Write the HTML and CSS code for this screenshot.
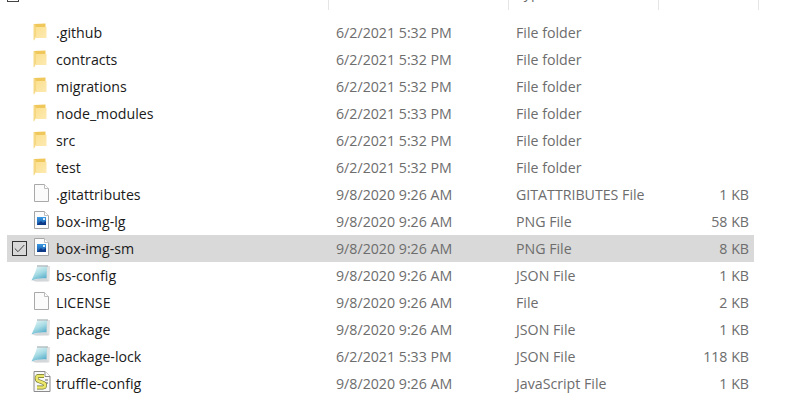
FILE: index.html
```html
<!DOCTYPE html>
<html lang="en">
<head>
    <meta charset="UTF-8">
    <title>Explorer file list</title>
    <link rel="stylesheet" href="styles.css">
</head>
<body>
    <svg class="defs" width="0" height="0">
        <defs>
            <linearGradient id="folder-fill" x1="0" y1="0" x2="1" y2="1">
                <stop offset="0" stop-color="#fbe08f"/>
                <stop offset="1" stop-color="#fdeab2"/>
            </linearGradient>
            <linearGradient id="pic-fill" x1="0" y1="0" x2="0" y2="1">
                <stop offset="0" stop-color="#3b9be6"/>
                <stop offset="1" stop-color="#14509f"/>
            </linearGradient>
            <linearGradient id="pad-fill" x1="0.2" y1="0" x2="0.7" y2="1">
                <stop offset="0" stop-color="#e4f5f6"/>
                <stop offset="0.5" stop-color="#a6dbe4"/>
                <stop offset="1" stop-color="#4fa9c8"/>
            </linearGradient>
            <symbol id="i-folder" viewBox="0 0 14 18">
                <path d="M1 1 L12.500 0.500 V14 H2 Z" fill="#f0c75a"/>
                <path d="M2.500 4 H13.500 V15 H2.500 Z" fill="url(#folder-fill)"/>
                <path d="M0.500 1 L2.500 2 V15 L1 17.500 L0.500 17 Z" fill="#f6d987"/>
            </symbol>
            <symbol id="i-blank" viewBox="0 0 15 18">
                <path d="M0.500 0.500 H10.500 L14.500 4.500 V17.500 H0.500 Z" fill="#fbfbfb" stroke="#a9a9a9"/>
                <path d="M10.500 0.500 V4.500 H14.500" fill="#fff" stroke="#bcbcbc"/>
            </symbol>
            <symbol id="i-image" viewBox="0 0 15 18">
                <path d="M0.500 0.500 H10.500 L14.500 4.500 V17.500 H0.500 Z" fill="#fcfcfc" stroke="#a5a5a5"/>
                <path d="M10.500 0.500 V4.500 H14.500" fill="#fff" stroke="#bcbcbc"/>
                <rect x="3" y="6" width="9" height="8" fill="url(#pic-fill)"/>
                <path d="M3 14 L7 10 L9 12 L12 10 V14 Z" fill="#0f3a88"/>
                <rect x="9" y="7" width="2" height="2" fill="#d8eefc"/>
            </symbol>
            <symbol id="i-notepad" viewBox="0 0 20 17">
                <path d="M15 1 H19 L18.500 16 L5 16.500 Z" fill="#e2e2e2"/>
                <path d="M1 15 C6 14 11 13.500 16 14 L18 16.500 H4 Z" fill="#d3d7d9"/>
                <path d="M6 1.500 H16 L15.500 13.500 C11 13 5 14 0.500 15.500 C2.500 11 5 6 6 1.500 Z" fill="url(#pad-fill)"/>
                <path d="M6 1 H17" stroke="#a3b0b4" stroke-width="1.200" fill="none"/>
            </symbol>
            <symbol id="i-script" viewBox="0 0 18 21">
                <path d="M1 0.500 H12 L17 5.500 V20.500 H1 Z" fill="#f8f8f8" stroke="#8c8c8c"/>
                <path d="M12 0.500 V5.500 H17" fill="#fff" stroke="#8c8c8c"/>
                <path d="M11 5 H5.500 C3 5 3 9 5.500 10 L10.500 12 C13 13 12.500 16.500 10 16.500 H4" fill="none" stroke="#6b7330" stroke-width="3.800"/>
                <path d="M11 5 H5.500 C3 5 3 9 5.500 10 L10.500 12 C13 13 12.500 16.500 10 16.500 H4" fill="none" stroke="#ece66a" stroke-width="2.600"/>
                <path d="M12 9 H15 M13 12 H15" stroke="#666" stroke-width="1"/>
            </symbol>
        </defs>
    </svg>

    <div class="head">
        <div class="head-cell head-name"><span class="head-check"></span></div>
        <div class="head-cell head-date"></div>
        <div class="head-cell head-type"><span>Type</span></div>
        <div class="head-cell head-size"></div>
        <div class="head-cell"></div>
    </div>

    <ul class="files">
        <li class="row"><span></span><svg class="icon folder"><use href="#i-folder"/></svg><span class="name">.github</span><span class="meta">6/2/2021 5:32 PM</span><span class="meta">File folder</span><span class="meta size"></span></li>
        <li class="row"><span></span><svg class="icon folder"><use href="#i-folder"/></svg><span class="name">contracts</span><span class="meta">6/2/2021 5:32 PM</span><span class="meta">File folder</span><span class="meta size"></span></li>
        <li class="row"><span></span><svg class="icon folder"><use href="#i-folder"/></svg><span class="name">migrations</span><span class="meta">6/2/2021 5:32 PM</span><span class="meta">File folder</span><span class="meta size"></span></li>
        <li class="row"><span></span><svg class="icon folder"><use href="#i-folder"/></svg><span class="name">node_modules</span><span class="meta">6/2/2021 5:33 PM</span><span class="meta">File folder</span><span class="meta size"></span></li>
        <li class="row"><span></span><svg class="icon folder"><use href="#i-folder"/></svg><span class="name">src</span><span class="meta">6/2/2021 5:32 PM</span><span class="meta">File folder</span><span class="meta size"></span></li>
        <li class="row"><span></span><svg class="icon folder"><use href="#i-folder"/></svg><span class="name">test</span><span class="meta">6/2/2021 5:32 PM</span><span class="meta">File folder</span><span class="meta size"></span></li>
        <li class="row"><span></span><svg class="icon page"><use href="#i-blank"/></svg><span class="name">.gitattributes</span><span class="meta">9/8/2020 9:26 AM</span><span class="meta">GITATTRIBUTES File</span><span class="meta size">1 KB</span></li>
        <li class="row"><span></span><svg class="icon page"><use href="#i-image"/></svg><span class="name">box-img-lg</span><span class="meta">9/8/2020 9:26 AM</span><span class="meta">PNG File</span><span class="meta size">58 KB</span></li>
        <li class="row selected">
            <span class="check"><svg width="11" height="9" viewBox="0 0 11 9"><path d="M0.800 4.500 L4 7.700 L10.300 1" fill="none" stroke="#444" stroke-width="1"/></svg></span>
            <svg class="icon page"><use href="#i-image"/></svg><span class="name">box-img-sm</span><span class="meta">9/8/2020 9:26 AM</span><span class="meta">PNG File</span><span class="meta size">8 KB</span>
        </li>
        <li class="row"><span></span><svg class="icon pad"><use href="#i-notepad"/></svg><span class="name">bs-config</span><span class="meta">9/8/2020 9:26 AM</span><span class="meta">JSON File</span><span class="meta size">1 KB</span></li>
        <li class="row"><span></span><svg class="icon page"><use href="#i-blank"/></svg><span class="name">LICENSE</span><span class="meta">9/8/2020 9:26 AM</span><span class="meta">File</span><span class="meta size">2 KB</span></li>
        <li class="row"><span></span><svg class="icon pad"><use href="#i-notepad"/></svg><span class="name">package</span><span class="meta">9/8/2020 9:26 AM</span><span class="meta">JSON File</span><span class="meta size">1 KB</span></li>
        <li class="row"><span></span><svg class="icon pad"><use href="#i-notepad"/></svg><span class="name">package-lock</span><span class="meta">6/2/2021 5:33 PM</span><span class="meta">JSON File</span><span class="meta size">118 KB</span></li>
        <li class="row"><span></span><svg class="icon script"><use href="#i-script"/></svg><span class="name">truffle-config</span><span class="meta">9/8/2020 9:26 AM</span><span class="meta">JavaScript File</span><span class="meta size">1 KB</span></li>
    </ul>
</body>
</html>
```

FILE: styles.css
```css
body {
    margin: 0;
    background-color: #fff;
    font-family: "Open Sans", "Noto Sans", sans-serif;
    font-size: 14.2px;
    overflow: hidden;
}
.defs {
    display: block;
    height: 0;
}
.head {
    display: grid;
    grid-template-columns: 329px 180px 150px 100px 1fr;
    height: 10px;
    overflow: hidden;
}
.head-cell {
    border-right: 1px solid #e5e5e5;
    overflow: hidden;
    color: #6d6d6d;
}
.head-cell:last-child {
    border-right: none;
}
.head-name {
    padding-left: 7px;
}
.head-check {
    display: block;
    width: 10px;
    height: 1px;
    border: 1px solid #444;
    border-top: none;
}
.head-type span {
    display: block;
    margin: -17px 0 0 7px;
}
.files {
    list-style: none;
    margin: 8.5px 0 0 7px;
    padding: 0;
    width: 747px;
}
.row {
    display: grid;
    grid-template-columns: 26px 23px 280px 180px 1fr auto;
    align-items: center;
    height: 27px;
    padding-right: 5px;
    box-sizing: border-box;
}
.row.selected {
    background-color: #d9d9d9;
}
.check {
    display: flex;
    align-items: center;
    justify-content: center;
    width: 15px;
    height: 15px;
    margin-left: 5px;
    box-sizing: border-box;
    border: 1px solid #333;
}
.icon {
    display: block;
}
.folder {
    width: 14px;
    height: 18px;
    margin-top: -1px;
}
.page {
    width: 15px;
    height: 18px;
    margin: -2px 0 0 1px;
}
.pad {
    width: 20px;
    height: 17px;
    margin: -3px 0 0 -2px;
}
.script {
    width: 18px;
    height: 21px;
    margin-top: -3px;
}
.name {
    color: #1a1a1a;
}
.meta {
    color: #6d6d6d;
}
.size {
    text-align: right;
}
```
